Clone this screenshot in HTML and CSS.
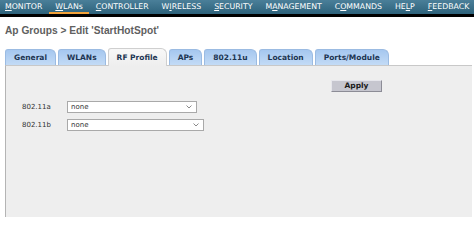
FILE: index.html
```html
<!DOCTYPE html>
<html>
<head>
<meta charset="utf-8">
<link rel="stylesheet" href="styles.css">
</head>
<body>
<nav class="topnav">
  <a class="nav-item"><u>M</u>ONITOR</a>
  <a class="nav-item active"><u>W</u>LANs</a>
  <a class="nav-item"><u>C</u>ONTROLLER</a>
  <a class="nav-item">W<u>I</u>RELESS</a>
  <a class="nav-item"><u>S</u>ECURITY</a>
  <a class="nav-item">M<u>A</u>NAGEMENT</a>
  <a class="nav-item">C<u>O</u>MMANDS</a>
  <a class="nav-item">HE<u>L</u>P</a>
  <a class="nav-item"><u>F</u>EEDBACK</a>
</nav>
<h1 class="page-title">Ap Groups &gt; Edit  'StartHotSpot'</h1>
<div class="tabs">
  <div class="tab">General</div>
  <div class="tab">WLANs</div>
  <div class="tab active">RF Profile</div>
  <div class="tab">APs</div>
  <div class="tab">802.11u</div>
  <div class="tab">Location</div>
  <div class="tab">Ports/Module</div>
</div>
<div class="panel">
  <div class="actions"><button class="btn">Apply</button></div>
  <div class="form">
    <div class="row">
      <label class="label">802.11a</label>
      <div class="select-wrap select-a">
        <select class="select"><option>none</option></select>
        <svg class="chev" width="6" height="4" viewBox="0 0 6 4"><path d="M0.5 0.5 L3 3 L5.5 0.5" fill="none" stroke="#8a8a8a" stroke-width="1"/></svg>
      </div>
    </div>
    <div class="row">
      <label class="label">802.11b</label>
      <div class="select-wrap select-b">
        <select class="select"><option>none</option></select>
        <svg class="chev" width="6" height="4" viewBox="0 0 6 4"><path d="M0.5 0.5 L3 3 L5.5 0.5" fill="none" stroke="#8a8a8a" stroke-width="1"/></svg>
      </div>
    </div>
  </div>
</div>
</body>
</html>
```
FILE: styles.css
```css
html, body {
  margin: 0;
  padding: 0;
  background: #fff;
}
body {
  font-family: "DejaVu Sans", sans-serif;
}
.topnav {
  display: flex;
  height: 14px;
  background: linear-gradient(#4a7f99, #2d627b);
  border-bottom: 3px solid #000;
  padding-left: 0;
  margin-left: -1.5px;
}
.nav-item {
  padding: 0 6.5px;
  font: 7.8px/14px "DejaVu Sans", sans-serif;
  color: #fff;
  white-space: nowrap;
  flex-shrink: 0;
}
.nav-item u {
  text-decoration: underline;
}
.nav-item.active {
  box-shadow: inset 0 -2px #f2a23a;
}
.page-title {
  margin: 8px 0 0 5px;
  font: bold 10.2px/12px "Liberation Sans", Arial, sans-serif;
  color: #606060;
}
.tabs {
  display: flex;
  align-items: flex-end;
  gap: 2px;
  margin-top: 11px;
  padding-left: 5px;
  position: relative;
  z-index: 1;
}
.tab {
  height: 15px;
  padding: 0 8px;
  font: bold 7.5px/16px "DejaVu Sans", sans-serif;
  color: #1c3552;
  background: linear-gradient(#a5c7ef, #c3dbf6);
  border: 1px solid #9bbbe2;
  border-bottom: none;
  border-radius: 3px 6px 0 0;
  white-space: nowrap;
}
.tab.active {
  height: 17px;
  line-height: 18px;
  background: linear-gradient(#f8f8f8, #eeeeee);
  border-color: #cfcfcf;
  margin-bottom: -1px;
}
.panel {
  height: 151px;
  margin: 0 2px 0 5px;
  background: #eeeeee;
  border-left: 1px solid #b4b4b4;
  border-top: 1px solid #c8c8c8;
}
.actions {
  display: flex;
  justify-content: flex-end;
  padding: 14px 90px 0 0;
}
.btn {
  width: 51px;
  height: 12px;
  padding: 0;
  margin: 0;
  font: bold 7.5px/10px "DejaVu Sans", sans-serif;
  color: #1a1a1a;
  background: #c6c6cf;
  border: 1px solid;
  border-color: #e6e6ec #8c8c96 #8c8c96 #e6e6ec;
}
.form {
  display: flex;
  flex-direction: column;
  gap: 6px;
  padding: 9px 0 0 16px;
}
.row {
  display: flex;
  align-items: center;
  height: 12px;
}
.label {
  width: 45px;
  font: 7px/12px "DejaVu Sans", sans-serif;
  color: #333;
}
.select-wrap {
  position: relative;
  height: 12px;
}
.select-a { width: 130px; }
.select-b { width: 137px; }
.select {
  display: block;
  appearance: none;
  -webkit-appearance: none;
  box-sizing: border-box;
  width: 100%;
  height: 12px;
  margin: 0;
  padding: 0 0 0 3px;
  font: 7px/10px "DejaVu Sans", sans-serif;
  color: #333;
  background: #fff;
  border: 1px solid #a9a9a9;
  border-radius: 0;
  outline: none;
}
.chev {
  position: absolute;
  right: 5px;
  top: 4px;
  pointer-events: none;
}
```
